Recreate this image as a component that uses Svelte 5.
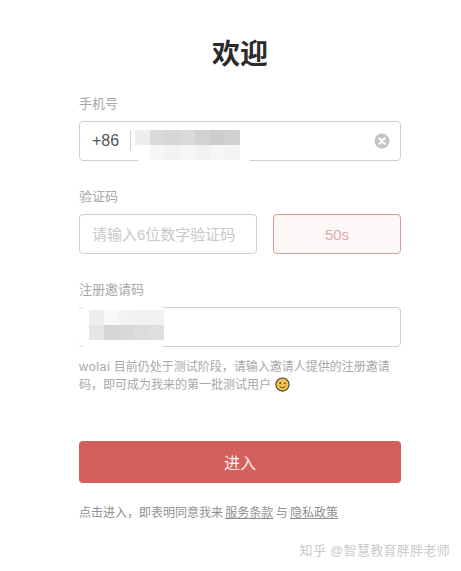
<script lang="ts">
	let code = $state('');
	let seconds = $state(50);

	// mosaic cells that hide the phone number and the invite code
	const phone_cells = [
		['#eeeeee', '#dadada', '#d6d6d6', '#dadada', '#d2d2d2', '#cdcdcd', '#d0d0d0'],
		['#ffffff', '#f6f6f6', '#f2f2f2', '#f6f6f6', '#f2f2f2', '#f6f6f6', '#f4f4f4']
	];
	const invite_cells = [
		['#eeeeee', '#f8f8f8', '#f3f3f3', '#f1f1f1', '#f1f1f1'],
		['#e6e6e6', '#d6d6d6', '#d8d8d8', '#dcdcdc', '#dedede']
	];
</script>

<main class="page">
	<h1 class="title">欢迎</h1>

	<div class="field first">
		<div class="label">手机号</div>
		<div class="input phone">
			<span class="prefix">+86</span>
			<span class="divider"></span>
			<span class="space"></span>
			<svg class="clear" viewBox="0 0 16 16" width="16" height="16" aria-hidden="true">
				<circle cx="8" cy="8" r="7.5" fill="#c4c4c4" />
				<path d="M5.3 5.3l5.4 5.4M10.7 5.3l-5.4 5.4" stroke="#fff" stroke-width="2.2" stroke-linecap="round" />
			</svg>
			<div class="smudge phone-smudge"></div>
			<div class="mosaic phone-mosaic">
				{#each phone_cells as row}
					{#each row as c}
						<span style="background:{c}"></span>
					{/each}
				{/each}
			</div>
		</div>
	</div>

	<div class="field">
		<div class="label">验证码</div>
		<div class="code-row">
			<input class="input code" type="text" placeholder="请输入6位数字验证码" bind:value={code} />
			<button class="resend" type="button">{seconds}s</button>
		</div>
	</div>

	<div class="field">
		<div class="label">注册邀请码</div>
		<div class="input invite">
			<div class="smudge invite-smudge"></div>
			<div class="mosaic invite-mosaic">
				{#each invite_cells as row}
					{#each row as c}
						<span style="background:{c}"></span>
					{/each}
				{/each}
			</div>
		</div>
	</div>

	<p class="hint">
		<span class="brand">wolai</span> 目前仍处于测试阶段，请输入邀请人提供的注册邀请码，即可成为我来的第一批测试用户
		<svg class="wink" viewBox="0 0 16 16" width="15" height="15" aria-hidden="true">
			<circle cx="8" cy="8" r="7" fill="#f2c14e" stroke="#4a4030" stroke-width="1.2" />
			<circle cx="5.6" cy="6.6" r="1" fill="#4a4030" />
			<path d="M9.2 6.6h2.6" stroke="#4a4030" stroke-width="1" />
			<path d="M5 10c1.5 2 4.5 2 6 0" fill="none" stroke="#4a4030" stroke-width="1" />
		</svg>
	</p>

	<button class="enter" type="button">进入</button>

	<p class="terms">点击进入，即表明同意我来 <u>服务条款</u> 与 <u>隐私政策</u></p>

	<div class="watermark">知乎 @智慧教育胖胖老师</div>
</main>

<style>
	:global(body) {
		margin: 0;
		background: #fff;
	}
	.page {
		position: relative;
		box-sizing: border-box;
		width: 461px;
		height: 571px;
		padding: 36px 60px 0 79px;
		overflow: hidden;
		font-family: "Liberation Sans", "Noto Sans CJK SC", sans-serif;
		color: #333;
	}
	.title {
		margin: 0;
		height: 38px;
		font-size: 28px;
		line-height: 38px;
		font-weight: 700;
		text-align: center;
		color: #2b2b2b;
	}
	.field { margin-top: 27px; }
	.field.first { margin-top: 21px; }
	.label {
		height: 18px;
		margin-bottom: 8px;
		font-size: 13px;
		line-height: 18px;
		color: #a8a8a8;
	}
	.input {
		position: relative;
		box-sizing: border-box;
		height: 40px;
		border: 1px solid #cfcfcf;
		border-radius: 4px;
		background: #fff;
	}
	.phone {
		display: flex;
		align-items: center;
		padding: 0 10px 0 12px;
	}
	.prefix {
		font-size: 16px;
		color: #555;
		width: 38px;
	}
	.divider {
		width: 1px;
		height: 20px;
		background: #d0d0d0;
	}
	.space { flex: 1; }
	.clear { display: block; }
	.smudge {
		position: absolute;
		background: #fff;
		border-radius: 8px;
	}
	.mosaic {
		position: absolute;
		display: grid;
		grid-auto-rows: 15px;
	}
	.phone-smudge {
		left: 58px;
		top: 22px;
		width: 112px;
		height: 22px;
	}
	.phone-mosaic {
		left: 55px;
		top: 8px;
		grid-template-columns: repeat(7, 15px);
	}
	.invite-smudge {
		left: -2px;
		top: -1px;
		width: 90px;
		height: 40px;
	}
	.invite-mosaic {
		left: 9px;
		top: 2px;
		grid-template-columns: repeat(5, 15px);
	}
	.code-row {
		display: flex;
		gap: 16px;
	}
	.code {
		width: 178px;
		padding: 0 12px;
		font: inherit;
		font-size: 15px;
		outline: none;
	}
	.code::placeholder { color: #c8c8c8; }
	.resend {
		box-sizing: border-box;
		width: 128px;
		height: 40px;
		border: 1px solid #e09a97;
		border-radius: 4px;
		background: #fdf8f7;
		font: inherit;
		font-size: 15px;
		color: #dcaaa7;
		padding: 0;
	}
	.hint {
		margin: 11px 0 0;
		padding-right: 6px;
		font-size: 12px;
		line-height: 18px;
		color: #a8a8a8;
	}
	.brand {
		font-size: 12.5px;
		letter-spacing: 0.6px;
	}
	.wink {
		vertical-align: -3px;
		margin-left: 1px;
	}
	.enter {
		display: block;
		box-sizing: border-box;
		width: 322px;
		height: 42px;
		margin-top: 47px;
		border: none;
		border-radius: 4px;
		background: #d4605c;
		font: inherit;
		font-size: 16px;
		color: #fbeeee;
		padding: 0;
	}
	.terms {
		margin: 21px 0 0;
		font-size: 12px;
		line-height: 18px;
		color: #8f8f8f;
		white-space: nowrap;
		word-spacing: -1px;
	}
	.watermark {
		position: absolute;
		right: 11px;
		bottom: 11px;
		font-size: 13px;
		line-height: 18px;
		letter-spacing: 0.3px;
		color: #cacaca;
		white-space: nowrap;
	}
</style>
